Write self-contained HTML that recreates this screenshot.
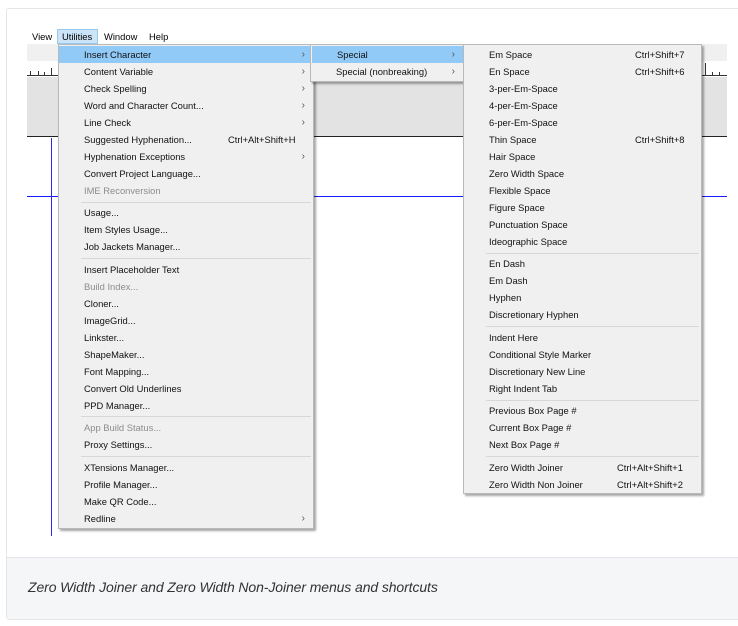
<!DOCTYPE html>
<html><head><meta charset="utf-8"><style>
*{margin:0;padding:0;box-sizing:border-box}
body{width:738px;height:626px;background:#fff;position:relative;overflow:hidden;font-family:"Liberation Sans",sans-serif}
.a{position:absolute}
.card{left:6px;top:8px;width:740px;height:612px;border:1px solid #e3e5e8;border-radius:3px}
.cap{left:7px;top:557px;width:740px;height:62px;background:#f5f6f8;border-top:1px solid #e3e5e8}
.cap span{position:absolute;left:21px;top:21px;font-style:italic;font-size:14px;color:#333;letter-spacing:-0.1px}
.mb{font-size:9.4px;color:#000;top:31px}
.menu{background:#f0f0f0;border:1px solid #b9b9b9;box-shadow:2px 2px 2px rgba(0,0,0,.35)}
.it{position:absolute;left:0;right:0;height:17px;font-size:9.4px;line-height:17px;color:#111}
.it .t{position:absolute;left:25px}
.it .k{position:absolute}
.it .r{position:absolute;right:8px;color:#555;font-size:10px}
.hl{background:#91c9f7}
.dis{color:#8c8c8c}
.sep{position:absolute;height:1px;background:#d7d7d7}
</style></head><body>
<div class="a card"></div>
<div class="a" style="left:27px;top:44px;width:700px;height:17px;background:#f0f0f0"></div>
<div class="a" style="left:27px;top:61px;width:700px;height:15px;background:#fff;border-bottom:1px solid #333"></div>
<div class="a" style="left:27px;top:77px;width:700px;height:60px;background:#e3e3e3;border-bottom:1px solid #222"></div>
<div class="a" style="left:30px;top:71px;width:1px;height:5px;background:#333"></div>
<div class="a" style="left:38px;top:71px;width:1px;height:5px;background:#333"></div>
<div class="a" style="left:44px;top:72px;width:1px;height:4px;background:#333"></div>
<div class="a" style="left:51px;top:68px;width:1px;height:8px;background:#333"></div>
<div class="a" style="left:705px;top:63px;width:1px;height:13px;background:#333"></div>
<div class="a" style="left:712px;top:72px;width:1px;height:4px;background:#333"></div>
<div class="a" style="left:719px;top:72px;width:1px;height:4px;background:#333"></div>
<div class="a" style="left:27px;top:196px;width:700px;height:1px;background:#1a1aff"></div>
<div class="a" style="left:51px;top:138px;width:1px;height:398px;background:#2a2ae0"></div>
<div class="a" style="left:57px;top:29px;width:41px;height:15px;background:#cce4f7;border:1px solid #99c8ee"></div>
<div class="a mb" style="left:32px">View</div>
<div class="a mb" style="left:62px">Utilities</div>
<div class="a mb" style="left:104px">Window</div>
<div class="a mb" style="left:149px">Help</div>
<div class="a menu" style="left:58px;top:44px;width:256px;height:485px">
<div class="it hl" style="top:1px"><span class="t">Insert Character</span><span class="r">›</span></div>
<div class="it" style="top:18px"><span class="t">Content Variable</span><span class="r">›</span></div>
<div class="it" style="top:35px"><span class="t">Check Spelling</span><span class="r">›</span></div>
<div class="it" style="top:52px"><span class="t">Word and Character Count...</span><span class="r">›</span></div>
<div class="it" style="top:69px"><span class="t">Line Check</span><span class="r">›</span></div>
<div class="it" style="top:86px"><span class="t">Suggested Hyphenation...</span><span class="k" style="left:169px">Ctrl+Alt+Shift+H</span></div>
<div class="it" style="top:103px"><span class="t">Hyphenation Exceptions</span><span class="r">›</span></div>
<div class="it" style="top:120px"><span class="t">Convert Project Language...</span></div>
<div class="it dis" style="top:137px"><span class="t">IME Reconversion</span></div>
<div class="sep" style="top:157px;left:22px;right:2px"></div>
<div class="it" style="top:159px"><span class="t">Usage...</span></div>
<div class="it" style="top:176px"><span class="t">Item Styles Usage...</span></div>
<div class="it" style="top:193px"><span class="t">Job Jackets Manager...</span></div>
<div class="sep" style="top:213px;left:22px;right:2px"></div>
<div class="it" style="top:216px"><span class="t">Insert Placeholder Text</span></div>
<div class="it dis" style="top:233px"><span class="t">Build Index...</span></div>
<div class="it" style="top:250px"><span class="t">Cloner...</span></div>
<div class="it" style="top:267px"><span class="t">ImageGrid...</span></div>
<div class="it" style="top:284px"><span class="t">Linkster...</span></div>
<div class="it" style="top:301px"><span class="t">ShapeMaker...</span></div>
<div class="it" style="top:318px"><span class="t">Font Mapping...</span></div>
<div class="it" style="top:335px"><span class="t">Convert Old Underlines</span></div>
<div class="it" style="top:352px"><span class="t">PPD Manager...</span></div>
<div class="sep" style="top:371px;left:22px;right:2px"></div>
<div class="it dis" style="top:374px"><span class="t">App Build Status...</span></div>
<div class="it" style="top:391px"><span class="t">Proxy Settings...</span></div>
<div class="sep" style="top:411px;left:22px;right:2px"></div>
<div class="it" style="top:414px"><span class="t">XTensions Manager...</span></div>
<div class="it" style="top:431px"><span class="t">Profile Manager...</span></div>
<div class="it" style="top:448px"><span class="t">Make QR Code...</span></div>
<div class="it" style="top:465px"><span class="t">Redline</span><span class="r">›</span></div>
</div>
<div class="a menu" style="left:310px;top:44px;width:154px;height:38px">
<div class="it hl" style="top:1px;left:1px;right:0"><span class="t">Special</span><span class="r">›</span></div>
<div class="it" style="top:18px"><span class="t">Special (nonbreaking)</span><span class="r">›</span></div>
</div>
<div class="a menu" style="left:463px;top:44px;width:239px;height:450px">
<div class="it" style="top:1px"><span class="t">Em Space</span><span class="k" style="left:171px">Ctrl+Shift+7</span></div>
<div class="it" style="top:18px"><span class="t">En Space</span><span class="k" style="left:171px">Ctrl+Shift+6</span></div>
<div class="it" style="top:35px"><span class="t">3-per-Em-Space</span></div>
<div class="it" style="top:52px"><span class="t">4-per-Em-Space</span></div>
<div class="it" style="top:69px"><span class="t">6-per-Em-Space</span></div>
<div class="it" style="top:86px"><span class="t">Thin Space</span><span class="k" style="left:171px">Ctrl+Shift+8</span></div>
<div class="it" style="top:103px"><span class="t">Hair Space</span></div>
<div class="it" style="top:120px"><span class="t">Zero Width Space</span></div>
<div class="it" style="top:137px"><span class="t">Flexible Space</span></div>
<div class="it" style="top:154px"><span class="t">Figure Space</span></div>
<div class="it" style="top:171px"><span class="t">Punctuation Space</span></div>
<div class="it" style="top:188px"><span class="t">Ideographic Space</span></div>
<div class="sep" style="top:208px;left:22px;right:2px"></div>
<div class="it" style="top:210px"><span class="t">En Dash</span></div>
<div class="it" style="top:227px"><span class="t">Em Dash</span></div>
<div class="it" style="top:244px"><span class="t">Hyphen</span></div>
<div class="it" style="top:261px"><span class="t">Discretionary Hyphen</span></div>
<div class="sep" style="top:281px;left:22px;right:2px"></div>
<div class="it" style="top:284px"><span class="t">Indent Here</span></div>
<div class="it" style="top:301px"><span class="t">Conditional Style Marker</span></div>
<div class="it" style="top:318px"><span class="t">Discretionary New Line</span></div>
<div class="it" style="top:335px"><span class="t">Right Indent Tab</span></div>
<div class="sep" style="top:355px;left:22px;right:2px"></div>
<div class="it" style="top:357px"><span class="t">Previous Box Page #</span></div>
<div class="it" style="top:374px"><span class="t">Current Box Page #</span></div>
<div class="it" style="top:391px"><span class="t">Next Box Page #</span></div>
<div class="sep" style="top:411px;left:22px;right:2px"></div>
<div class="it" style="top:414px"><span class="t">Zero Width Joiner</span><span class="k" style="left:153px">Ctrl+Alt+Shift+1</span></div>
<div class="it" style="top:431px"><span class="t">Zero Width Non Joiner</span><span class="k" style="left:153px">Ctrl+Alt+Shift+2</span></div>
</div>
<div class="a cap"><span>Zero Width Joiner and Zero Width Non-Joiner menus and shortcuts</span></div>
</body></html>
